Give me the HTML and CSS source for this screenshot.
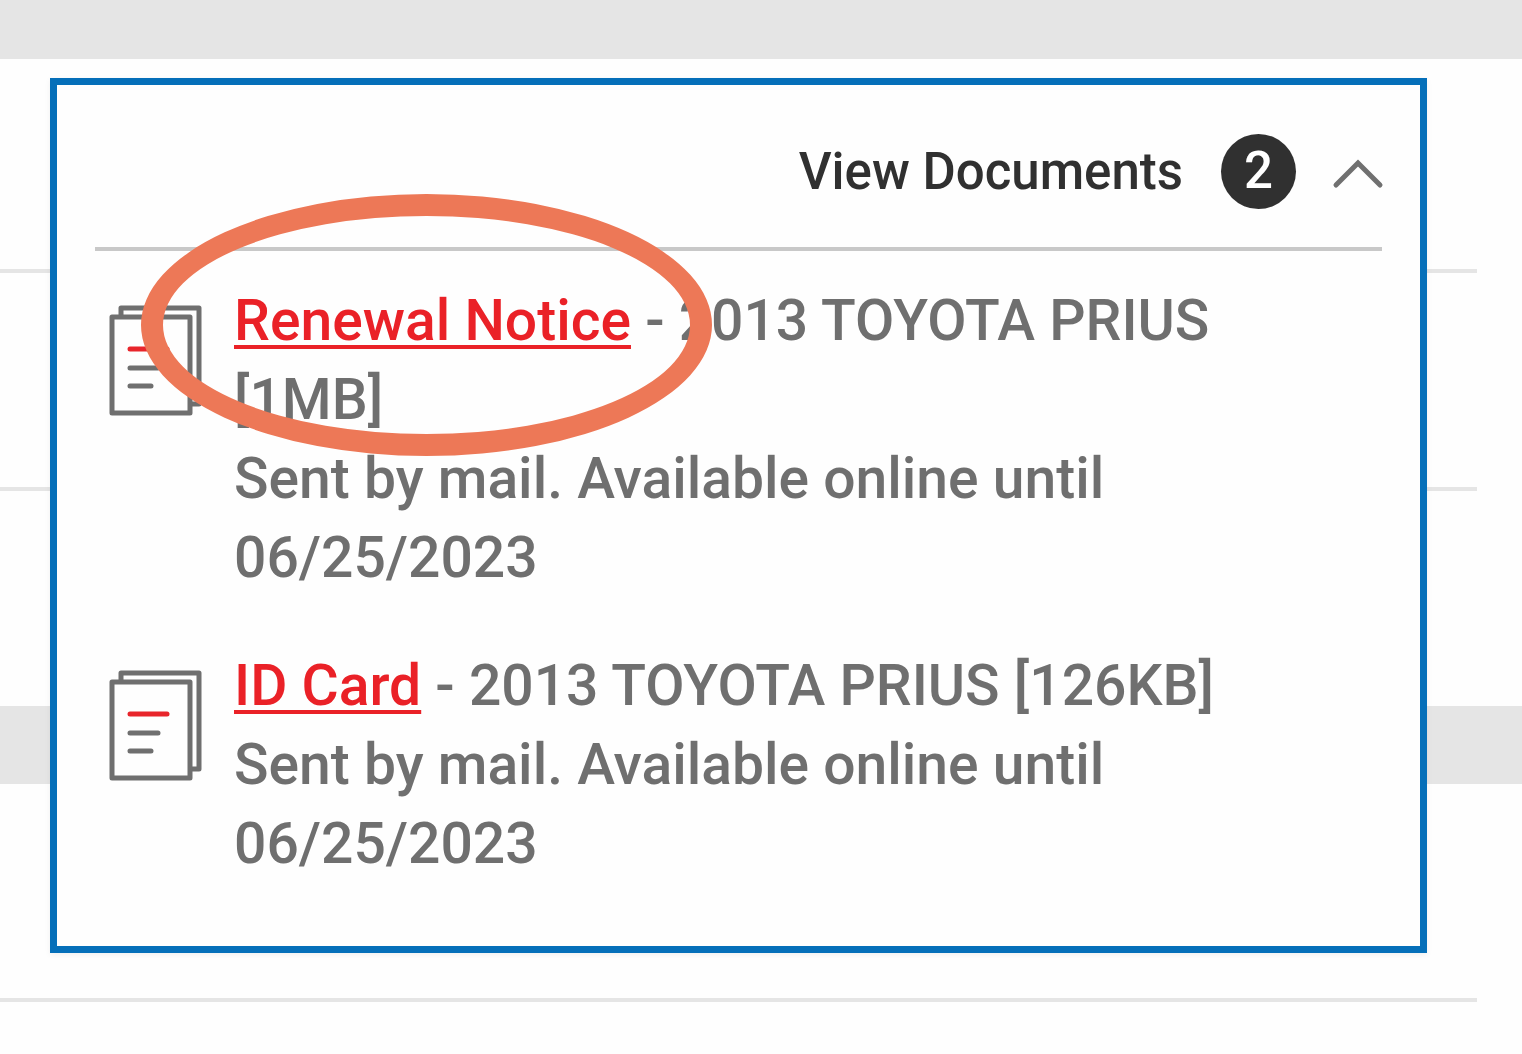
FILE: index.html
```html
<!DOCTYPE html>
<html lang="en">
<head>
<meta charset="utf-8">
<meta name="viewport" content="width=device-width, initial-scale=1">
<title>View Documents</title>
<link rel="stylesheet" href="styles.css">
</head>
<body>
<svg class="sprite" aria-hidden="true">
  <symbol id="document" viewBox="0 0 93 112">
    <g fill="none" stroke-width="5" stroke-linejoin="round">
      <path stroke="#6f6f6f" d="M12 11V3H90V99H83"/>
      <path stroke="#6f6f6f" d="M3 12H81V108H3Z"/>
      <g stroke-linecap="round">
        <path stroke="#e8252b" d="M21 44H58"/>
        <path stroke="#6f6f6f" d="M21 63H49M21 81H42"/>
      </g>
    </g>
  </symbol>
</svg>
<main class="page">
  <div class="band band-top"></div>
  <div class="rows">
    <div class="row"></div>
    <div class="row"></div>
    <div class="row row-last"></div>
  </div>
  <div class="band"></div>
  <div class="rows">
    <div class="row"></div>
  </div>

  <section class="panel">
    <button class="toggle" type="button" aria-expanded="true" aria-controls="documents">
      <span>View Documents</span>
      <span class="count">2</span>
      <svg class="chevron" viewBox="0 0 48 30" aria-hidden="true"><path d="M2 28L24 6L46 28" fill="none" stroke="#707070" stroke-width="5" stroke-linecap="round"/></svg>
    </button>
    <ul class="documents" id="documents">
      <li class="document">
        <svg class="icon" aria-hidden="true"><use href="#document"/></svg>
        <div class="details">
          <div><a href="#renewal">Renewal Notice</a> - 2013 TOYOTA PRIUS [1MB]</div>
          <div>Sent by mail. Available online until 06/25/2023</div>
        </div>
      </li>
      <li class="document">
        <svg class="icon" aria-hidden="true"><use href="#document"/></svg>
        <div class="details">
          <div><a href="#id-card">ID Card</a> - 2013 TOYOTA PRIUS [126KB]</div>
          <div>Sent by mail. Available online until 06/25/2023</div>
        </div>
      </li>
    </ul>
    <div class="highlight"></div>
  </section>
</main>
</body>
</html>
```
FILE: styles.css
```css
* {
  box-sizing: border-box;
}

body {
  margin: 0;
  background: #fefefe;
  color: #6f6f6f;
  font-family: Roboto, "Liberation Sans", sans-serif;
  font-size: 57px;
  font-weight: 500;
  line-height: 79px;
}

.sprite {
  position: absolute;
  width: 0;
  height: 0;
}

.page {
  position: relative;
  padding-bottom: 52px;
}

.band {
  height: 78px;
  background: #e5e5e5;
}

.band-top {
  height: 59px;
}

.rows {
  padding-right: 45px;
}

.row {
  height: 218px;
  border-bottom: 4px solid #e5e5e5;
}

.row:first-child:not(:last-child) {
  height: 214px;
}

.row-last {
  height: 215px;
  border-bottom: 0;
}

.panel {
  position: absolute;
  top: 78px;
  left: 50px;
  right: 95px;
  padding: 0 38px 63px;
  border: 7px solid #056fb9;
  background: #fefefe;
  box-shadow: 0 2px 6px rgba(0, 0, 0, 0.06);
}

.toggle {
  display: flex;
  align-items: center;
  justify-content: flex-end;
  gap: 38px;
  width: 100%;
  padding: 49px 0 38px;
  border: 0;
  border-bottom: 4px solid #c8c8c8;
  background: none;
  color: #303030;
  font: inherit;
  font-size: 51px;
  line-height: 74px;
  cursor: pointer;
}

.count {
  width: 75px;
  height: 75px;
  border-radius: 50%;
  background: #303030;
  color: #fff;
  text-align: center;
}

.chevron {
  width: 48px;
  height: 30px;
  overflow: visible;
}

.documents {
  display: flex;
  flex-direction: column;
  gap: 49px;
  margin: 0;
  padding: 30px 70px 0 14px;
  list-style: none;
}

.document {
  display: flex;
  align-items: flex-start;
  gap: 32px;
}

.icon {
  flex: none;
  width: 93px;
  height: 112px;
  margin-top: 24px;
}

.details {
  flex: 1;
}

a {
  color: #ea2127;
  text-decoration: underline;
  text-decoration-thickness: 4px;
  text-decoration-skip-ink: none;
  text-underline-offset: 5px;
}

.highlight {
  position: absolute;
  top: 109px;
  left: 84px;
  width: 571px;
  height: 262px;
  border: 22px solid #ed7857;
  border-radius: 50%;
  pointer-events: none;
}
```
